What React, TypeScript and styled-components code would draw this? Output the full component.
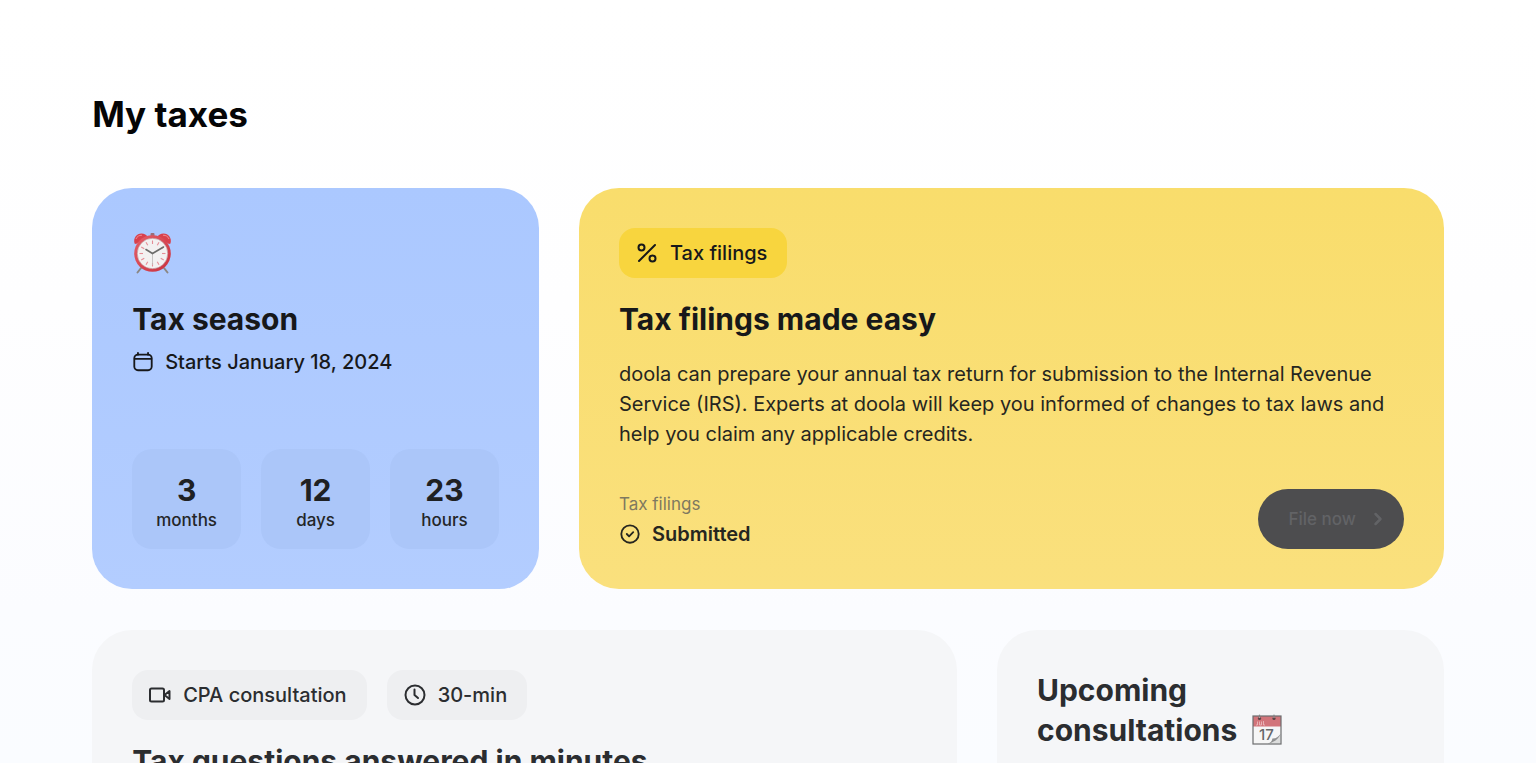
import React from "react";
import styled, { createGlobalStyle } from "styled-components";

const GlobalStyle = createGlobalStyle`
  *, *::before, *::after { box-sizing: border-box; }
  body {
    margin: 0;
    background: #fbfcff;
    font-family: Inter, "Liberation Sans", sans-serif;
    color: #17181a;
  }
  h1, h2, p, dl, dd, dt { margin: 0; }
`;

const Page = styled.main`
  height: 100vh;
  overflow: hidden;
  padding: 90px 6% 0;
  background: linear-gradient(#ffffff 0, #fefeff 40%, #fbfcff 80%, #fafcff 100%);
`;

const PageTitle = styled.h1`
  font-size: 35px;
  line-height: 48px;
  font-weight: 700;
  color: #050506;
  margin-bottom: 50px;
`;

const CardRow = styled.div<{ $columns: string }>`
  display: grid;
  grid-template-columns: ${(p) => p.$columns};
  gap: 40px;
  margin-bottom: 41px;
`;

const Card = styled.section<{ $background: string; $ink?: string }>`
  display: flex;
  flex-direction: column;
  padding: 40px;
  border-radius: 40px;
  background: ${(p) => p.$background};
  color: ${(p) => p.$ink ?? "#17181a"};
`;

const TopRowCard = styled(Card)`
  min-height: 401px;
`;

const CardTitle = styled.h2`
  font-size: 30px;
  line-height: 40px;
  font-weight: 700;
`;

const EmojiSlot = styled.div`
  display: flex;
  align-items: center;
  height: 50px;
  margin-bottom: 21px;
`;

const BadgeList = styled.div`
  display: flex;
  gap: 20px;
  margin-bottom: 21px;
`;

const Badge = styled.span<{ $background: string }>`
  display: flex;
  align-items: center;
  gap: 11px;
  height: 50px;
  padding: 0 20px 0 16px;
  border-radius: 16px;
  background: ${(p) => p.$background};
  font-size: 20px;
  font-weight: 500;
  white-space: nowrap;
`;

const DateLine = styled.p`
  display: flex;
  align-items: center;
  gap: 11px;
  margin-top: 8px;
  font-size: 20px;
  line-height: 30px;
  font-weight: 500;
`;

const Countdown = styled.dl`
  display: flex;
  gap: 20px;
  margin-top: auto;
`;

const CountTile = styled.div`
  display: flex;
  flex: 1;
  flex-direction: column-reverse;
  justify-content: center;
  align-items: center;
  height: 100px;
  padding-top: 6px;
  border-radius: 20px;
  background: #abc6f9;
`;

const CountValue = styled.dd`
  font-size: 30px;
  line-height: 36px;
  font-weight: 700;
  color: #1f2123;
`;

const CountUnit = styled.dt`
  font-size: 17px;
  line-height: 24px;
  font-weight: 500;
  color: #242628;
`;

const Description = styled.p`
  margin-top: 20px;
  font-size: 20px;
  line-height: 30px;
  color: #26261f;
`;

const CardFooter = styled.div`
  display: flex;
  justify-content: space-between;
  align-items: flex-end;
  margin-top: auto;
`;

const StatusLabel = styled.p`
  font-size: 17px;
  line-height: 30px;
  color: #7f7960;
`;

const StatusValue = styled.p`
  display: flex;
  align-items: center;
  gap: 11px;
  font-size: 20px;
  line-height: 30px;
  font-weight: 600;
  color: #26261f;
`;

const PillButton = styled.button`
  display: flex;
  align-items: center;
  gap: 12px;
  height: 60px;
  padding: 0 16px 0 30px;
  border: 0;
  border-radius: 30px;
  background: #4d4d4f;
  color: #626366;
  font: 500 17px/24px Inter, "Liberation Sans", sans-serif;
`;

const TitleWithEmoji = styled(CardTitle)`
  max-width: 260px;

  svg {
    margin-left: 8px;
    vertical-align: -4px;
  }
`;

const Icon = ({ size = 24, children }: { size?: number; children: React.ReactNode }) => (
  <svg
    width={size}
    height={size}
    viewBox="0 0 24 24"
    fill="none"
    stroke="currentColor"
    strokeWidth="2"
    strokeLinecap="round"
    strokeLinejoin="round"
    aria-hidden="true"
  >
    {children}
  </svg>
);

const AlarmClock = () => (
  <svg width="41" height="44" viewBox="0 0 39 44" aria-hidden="true">
    <defs>
      <linearGradient id="rim" x1="0" y1="0" x2="1" y2="1">
        <stop offset="0" stopColor="#e5606a" />
        <stop offset="1" stopColor="#c9303d" />
      </linearGradient>
    </defs>
    <path d="M8 37l-3.500 4.500M31 37l3.500 4.500" stroke="#8b8784" strokeWidth="2" strokeLinecap="round" />
    <rect x="17.500" y="2" width="4" height="4" rx="1" fill="#9b6d78" />
    <path d="M1.500 12.500C0 7 3.500 2.500 8.500 2.500c3 0 5 1.300 6 3.200L3 13z" fill="#d9404c" />
    <path d="M37.500 12.500C39 7 35.500 2.500 30.500 2.500c-3 0-5 1.300-6 3.200L36 13z" fill="#d9404c" />
    <path d="M3 8c1-2.500 3-3.800 6-3.800M36 8c-1-2.500-3-3.800-6-3.800" stroke="#f08b8f" strokeWidth="1" fill="none" />
    <circle cx="19.500" cy="22.500" r="18.300" fill="url(#rim)" />
    <circle cx="19.500" cy="22.500" r="15.300" fill="#f3f1f1" stroke="#b9868c" strokeWidth="0.600" />
    {Array.from({ length: 12 }, (_, i) => (
      <line
        key={i}
        x1="19.5"
        y1="9.5"
        x2="19.5"
        y2="13"
        stroke="#e58d96"
        strokeWidth="1.100"
        transform={`rotate(${i * 30} 19.5 22.5)`}
      />
    ))}
    <path d="M19.500 22.500V34" stroke="#bdbab9" strokeWidth="0.800" />
    <path d="M13 18.500l6.500 4L30.500 16" stroke="#6c6c6a" strokeWidth="1.600" fill="none" strokeLinecap="round" />
  </svg>
);

const CalendarPage = () => (
  <svg width="30" height="31" viewBox="0 0 30 31" role="img" aria-label="July 17">
    <rect x="1" y="2" width="28" height="28" fill="#f6f6f6" />
    <rect x="1" y="2" width="28" height="10.500" fill="#d2747a" />
    <path d="M5.500 7.500V11H4M7.500 7.500V11H9.500V7.500M11.500 7v4h1.500" stroke="#edc0c3" strokeWidth="0.800" fill="none" />
    <circle cx="7.500" cy="4.500" r="1.600" fill="#5c4447" />
    <circle cx="22" cy="4.500" r="1.600" fill="#5c4447" />
    <path d="M7.500 0.500v3.500M22 0.500v3.500" stroke="#a5a7a9" strokeWidth="1.200" />
    <text x="7" y="26" fontFamily="Inter, sans-serif" fontSize="15" fontWeight="500" fill="#66686b">
      17
    </text>
    <path d="M15.500 29.500c4-1 4.500-3 5-5 3 .5 6-1.500 8-4.500v9.500z" fill="#dcdddd" />
    <path d="M15.500 29.500c4-1 4.500-3 5-5 3 .5 6-1.500 8-4.500-1.500 4.500-7 9-13 9.500z" fill="#8f9091" />
    <rect x="1" y="2" width="28" height="28" fill="none" stroke="#6c6d6f" strokeWidth="1.200" />
  </svg>
);

const countdown = [
  { value: 3, unit: "months" },
  { value: 12, unit: "days" },
  { value: 23, unit: "hours" },
];

export default function App() {
  return (
    <>
      <GlobalStyle />
      <Page>
        <PageTitle>My taxes</PageTitle>

        <CardRow $columns="31fr 60fr">
          <TopRowCard $background="linear-gradient(#abc8ff, #b3cdff)">
            <EmojiSlot>
              <AlarmClock />
            </EmojiSlot>
            <CardTitle>Tax season</CardTitle>
            <DateLine>
              <Icon size={22}>
                <rect x="2.500" y="4" width="19" height="17" rx="4" />
                <path d="M3 8.500h18M6.500 4V2M17.500 4V2" />
              </Icon>
              Starts January 18, 2024
            </DateLine>
            <Countdown>
              {countdown.map(({ value, unit }) => (
                <CountTile key={unit}>
                  <CountUnit>{unit}</CountUnit>
                  <CountValue>{value}</CountValue>
                </CountTile>
              ))}
            </Countdown>
          </TopRowCard>

          <TopRowCard $background="linear-gradient(#f9dd6c, #fae07d)">
            <BadgeList>
              <Badge $background="#f8d53e">
                <Icon>
                  <circle cx="6.500" cy="6.500" r="3" />
                  <circle cx="17.500" cy="17.500" r="3" />
                  <path d="M20 4L4 20" />
                </Icon>
                Tax filings
              </Badge>
            </BadgeList>
            <CardTitle>Tax filings made easy</CardTitle>
            <Description>
              doola can prepare your annual tax return for submission to the Internal Revenue Service
              (IRS). Experts at doola will keep you informed of changes to tax laws and help you claim
              any applicable credits.
            </Description>
            <CardFooter>
              <div>
                <StatusLabel>Tax filings</StatusLabel>
                <StatusValue>
                  <Icon size={22}>
                    <circle cx="12" cy="12" r="9.500" />
                    <path d="M8.500 12l2.500 2.500 4.500-4.500" />
                  </Icon>
                  Submitted
                </StatusValue>
              </div>
              <PillButton type="button" disabled>
                File now
                <Icon size={20}>
                  <path d="M9 6l6 6-6 6" strokeWidth="3" />
                </Icon>
              </PillButton>
            </CardFooter>
          </TopRowCard>
        </CardRow>

        <CardRow $columns="60fr 31fr">
          <Card $background="#f5f6f8" $ink="#2b2d30">
            <BadgeList>
              <Badge $background="#eeeff1">
                <Icon>
                  <rect x="2" y="5.500" width="14" height="13" rx="1.500" />
                  <path d="M16.500 12l5-4v8z" />
                </Icon>
                CPA consultation
              </Badge>
              <Badge $background="#eeeff1">
                <Icon>
                  <circle cx="12" cy="12" r="9.500" />
                  <path d="M11.500 6.500V12l3.500 3" />
                </Icon>
                30-min
              </Badge>
            </BadgeList>
            <CardTitle>Tax questions answered in minutes</CardTitle>
          </Card>

          <Card $background="#f5f6f8" $ink="#2b2d30">
            <TitleWithEmoji>
              Upcoming consultations <CalendarPage />
            </TitleWithEmoji>
          </Card>
        </CardRow>
      </Page>
    </>
  );
}
